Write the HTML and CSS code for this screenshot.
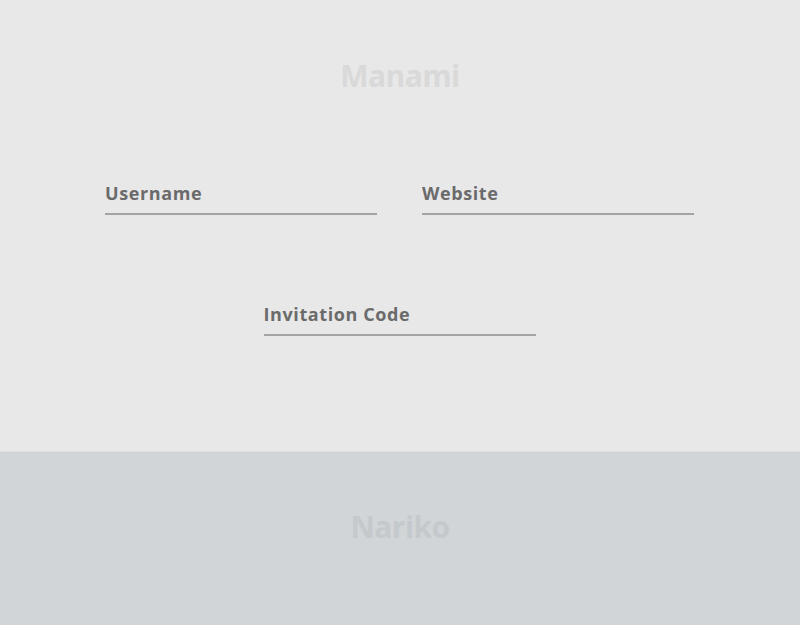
FILE: index.html
```html
<!DOCTYPE html>
<html lang="en">
<head>
  <meta charset="UTF-8" />
  <meta name="viewport" content="width=device-width, initial-scale=1.0" />
  <title>Text Input Effects</title>
  <link rel="stylesheet" href="styles.css">
</head>
<body>
  <section class="content content-manami">
    <h2 class="content-title">Manami</h2>
    <div class="fields">
      <label class="field">
        <input class="field-input" type="text" />
        <span class="field-label">Username</span>
      </label>
      <label class="field">
        <input class="field-input" type="text" />
        <span class="field-label">Website</span>
      </label>
      <label class="field">
        <input class="field-input" type="text" />
        <span class="field-label">Invitation Code</span>
      </label>
    </div>
  </section>
  <section class="content content-nariko">
    <h2 class="content-title">Nariko</h2>
  </section>
</body>
</html>
```

FILE: styles.css
```css
body {
  margin: 0;
  font-family: 'Open Sans', 'Liberation Sans', sans-serif;
  overflow: hidden;
}
.content {
  padding: 60px 0 0;
  box-sizing: border-box;
}
.content-manami {
  height: 451px;
  background: #e8e8e8;
}
.content-nariko {
  height: 174px;
  background: #d1d5d7;
  border-top: 1px solid #dde0e0;
  padding-top: 59px;
}
.content-title {
  margin: 0;
  font-size: 30px;
  line-height: 32px;
  font-weight: 700;
  letter-spacing: -0.6px;
  text-align: center;
  color: #d9d9d9;
}
.content-nariko .content-title {
  color: #c4c9cc;
}
.fields {
  width: 589px;
  padding-right: 1px;
  margin: 89px auto 0;
  display: flex;
  flex-wrap: wrap;
  justify-content: center;
  column-gap: 45px;
  row-gap: 87px;
}
.field {
  position: relative;
  width: 272px;
  display: block;
  padding-bottom: 8px;
  border-bottom: 2px solid #a3a3a3;
}
.field-input {
  position: absolute;
  top: 0; left: 0;
  width: 100%;
  height: 100%;
  border: none;
  background: transparent;
  outline: none;
  padding: 0;
}
.field-label {
  display: block;
  font-size: 18px;
  line-height: 24px;
  font-weight: 700;
  letter-spacing: 0.6px;
  color: #6b6b6b;
}
```
